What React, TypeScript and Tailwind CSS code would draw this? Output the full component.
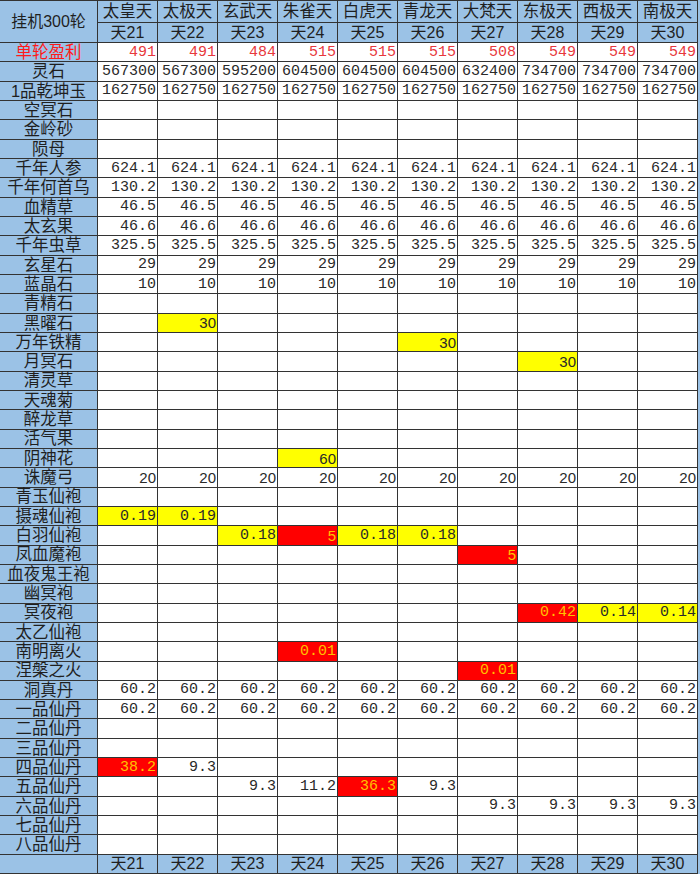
const cols1 = ["太皇天", "太极天", "玄武天", "朱雀天", "白虎天", "青龙天", "大梵天", "东极天", "西极天", "南极天"];
const cols2 = ["天21", "天22", "天23", "天24", "天25", "天26", "天27", "天28", "天29", "天30"];

type Cell = { v: string; bg?: "y" | "r"; sans?: boolean } | null;

const all = (v: string): Cell[] => Array(10).fill({ v });
const none = (): Cell[] => Array(10).fill(null);
const some = (m: Record<number, Cell>): Cell[] => Array.from({ length: 10 }, (_, i) => m[i] ?? null);

const rows: { label: string; cells: Cell[]; red?: boolean }[] = [
  { label: "单轮盈利", red: true, cells: ["491", "491", "484", "515", "515", "515", "508", "549", "549", "549"].map((v) => ({ v })) },
  { label: "灵石", cells: ["567300", "567300", "595200", "604500", "604500", "604500", "632400", "734700", "734700", "734700"].map((v) => ({ v })) },
  { label: "1品乾坤玉", cells: all("162750") },
  { label: "空冥石", cells: none() },
  { label: "金岭砂", cells: none() },
  { label: "陨母", cells: none() },
  { label: "千年人参", cells: all("624.1") },
  { label: "千年何首乌", cells: all("130.2") },
  { label: "血精草", cells: all("46.5") },
  { label: "太玄果", cells: all("46.6") },
  { label: "千年虫草", cells: all("325.5") },
  { label: "玄星石", cells: all("29") },
  { label: "蓝晶石", cells: all("10") },
  { label: "青精石", cells: none() },
  { label: "黑曜石", cells: some({ 1: { v: "30", bg: "y", sans: true } }) },
  { label: "万年铁精", cells: some({ 5: { v: "30", bg: "y", sans: true } }) },
  { label: "月冥石", cells: some({ 7: { v: "30", bg: "y", sans: true } }) },
  { label: "清灵草", cells: none() },
  { label: "天魂菊", cells: none() },
  { label: "醉龙草", cells: none() },
  { label: "活气果", cells: none() },
  { label: "阴神花", cells: some({ 3: { v: "60", bg: "y", sans: true } }) },
  { label: "诛魔弓", cells: Array(10).fill({ v: "20", sans: true }) },
  { label: "青玉仙袍", cells: none() },
  { label: "摄魂仙袍", cells: some({ 0: { v: "0.19", bg: "y" }, 1: { v: "0.19", bg: "y" } }) },
  {
    label: "白羽仙袍",
    cells: some({ 2: { v: "0.18", bg: "y" }, 3: { v: "5", bg: "r", sans: true }, 4: { v: "0.18", bg: "y" }, 5: { v: "0.18", bg: "y" } }),
  },
  { label: "凤血魔袍", cells: some({ 6: { v: "5", bg: "r", sans: true } }) },
  { label: "血夜鬼王袍", cells: none() },
  { label: "幽冥袍", cells: none() },
  { label: "冥夜袍", cells: some({ 7: { v: "0.42", bg: "r" }, 8: { v: "0.14", bg: "y" }, 9: { v: "0.14", bg: "y" } }) },
  { label: "太乙仙袍", cells: none() },
  { label: "南明离火", cells: some({ 3: { v: "0.01", bg: "r" } }) },
  { label: "涅槃之火", cells: some({ 6: { v: "0.01", bg: "r" } }) },
  { label: "洞真丹", cells: all("60.2") },
  { label: "一品仙丹", cells: all("60.2") },
  { label: "二品仙丹", cells: none() },
  { label: "三品仙丹", cells: none() },
  { label: "四品仙丹", cells: some({ 0: { v: "38.2", bg: "r" }, 1: { v: "9.3" } }) },
  { label: "五品仙丹", cells: some({ 2: { v: "9.3" }, 3: { v: "11.2" }, 4: { v: "36.3", bg: "r" }, 5: { v: "9.3" } }) },
  { label: "六品仙丹", cells: some({ 6: { v: "9.3" }, 7: { v: "9.3" }, 8: { v: "9.3" }, 9: { v: "9.3" } }) },
  { label: "七品仙丹", cells: none() },
  { label: "八品仙丹", cells: none() },
];

// Liberation Sans first so the line box stays short; CJK glyphs fall through to Noto
const head = "font-['Liberation_Sans','Noto_Sans_CJK_SC',sans-serif]";

function DataCell({ cell, red }: { cell: Cell; red?: boolean }) {
  if (!cell) return <div className="bg-white" />;
  const bg = cell.bg === "y" ? "bg-[#ffff00]" : cell.bg === "r" ? "bg-[#ff0000]" : "bg-white";
  const color = cell.bg === "r" ? "text-[#ffc000]" : red ? "text-[#e8383d]" : "text-[#2a2a2a]";
  const font = cell.sans
    ? "font-['Liberation_Sans',sans-serif] text-[15px]"
    : "font-['Liberation_Mono',monospace] text-[15px]";
  return (
    <div className={`${bg} ${color} ${font} flex items-center justify-end pr-px leading-none whitespace-nowrap overflow-hidden`}>
      {cell.v}
    </div>
  );
}

export default function App() {
  return (
    <div className="w-[700px] h-[875px] bg-white flex items-start">
      <div className="grid grid-cols-[97px_repeat(10,59px)] grid-rows-[21px_19px_repeat(42,18.34px)_18px] gap-px bg-[#333333] border-t border-r border-b border-[#333333]">
        <div className={`row-span-2 bg-[#9bc2e6] ${head} text-[16px] text-[#1f1f1f] flex items-center justify-center leading-none`}>
          挂机300轮
        </div>
        {cols1.map((c) => (
          <div key={c} className={`bg-[#9bc2e6] ${head} text-[16.5px] text-[#1f1f1f] flex items-center justify-center leading-none`}>
            {c}
          </div>
        ))}
        {cols2.map((c) => (
          <div key={c} className={`bg-[#9bc2e6] ${head} text-[16px] text-[#1f1f1f] flex items-center justify-center leading-none`}>
            {c}
          </div>
        ))}
        {rows.map((r) => (
          <div key={r.label} className="contents">
            <div
              className={`bg-[#9bc2e6] ${head} text-[16.5px] ${r.red ? "text-[#ff1a1a]" : "text-[#1f1f1f]"} flex items-center justify-center leading-none whitespace-nowrap`}
            >
              {r.label}
            </div>
            {r.cells.map((c, i) => (
              <DataCell key={i} cell={c} red={r.red} />
            ))}
          </div>
        ))}
        <div className="bg-[#9bc2e6]" />
        {cols2.map((c) => (
          <div key={"f" + c} className={`bg-[#9bc2e6] ${head} text-[16px] text-[#1f1f1f] flex items-center justify-center leading-none`}>
            {c}
          </div>
        ))}
      </div>
      <div className="w-[2px] h-[874px] bg-[#9bc2e6]" />
    </div>
  );
}
